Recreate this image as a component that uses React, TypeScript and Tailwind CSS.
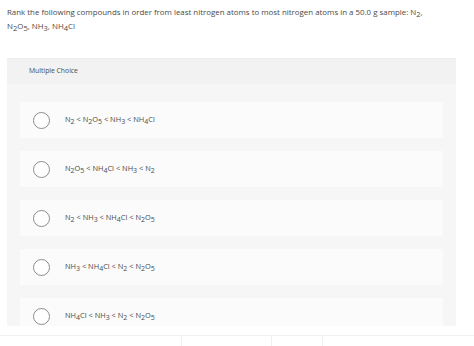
import React from "react";

const Sub = ({ children }: { children: React.ReactNode }) => (
  <span className="text-[0.95em] relative top-[0.2em]">{children}</span>
);

const N2 = () => (<>N<Sub>2</Sub></>);
const N2O5 = () => (<>N<Sub>2</Sub>O<Sub>5</Sub></>);
const NH3 = () => (<>NH<Sub>3</Sub></>);
const NH4Cl = () => (<>NH<Sub>4</Sub>Cl</>);

const options: React.ReactNode[] = [
  <><N2 /> &lt; <N2O5 /> &lt; <NH3 /> &lt; <NH4Cl /></>,
  <><N2O5 /> &lt; <NH4Cl /> &lt; <NH3 /> &lt; <N2 /></>,
  <><N2 /> &lt; <NH3 /> &lt; <NH4Cl /> &lt; <N2O5 /></>,
  <><NH3 /> &lt; <NH4Cl /> &lt; <N2 /> &lt; <N2O5 /></>,
  <><NH4Cl /> &lt; <NH3 /> &lt; <N2 /> &lt; <N2O5 /></>,
];

export default function App() {
  return (
    <div className="w-[474px] h-[346px] bg-white overflow-hidden text-[#4a4a4a]" style={{ fontFamily: "'Open Sans', sans-serif" }}>
      <div className="px-[7px] pt-[5px] text-[7.9px] leading-[14px] h-[58px] whitespace-nowrap">
        Rank the following compounds in order from least nitrogen atoms to most nitrogen atoms in a 50.0 g sample: <N2 />,
        <br />
        <N2O5 />, <NH3 />, <NH4Cl />
      </div>
      <div className="mx-[7px] w-[449px] border-t border-[#ececec]">
        <div className="bg-[#f2f2f2] h-[25px] flex items-center pl-[22px] text-[6.8px] text-[#4a4a4a]">Multiple Choice</div>
        <div className="bg-[#f6f6f6] h-[242px] overflow-hidden px-[13px] pt-[18px] flex flex-col gap-[13px]">
          {options.map((o, i) => (
            <div key={i} className="bg-[#fbfbfb] h-[36px] shrink-0 flex items-center">
              <div className="ml-[13px] w-[17px] h-[17px] rounded-full border-[1.5px] border-[#8c8c8c] bg-white shrink-0" />
              <div className="ml-[15px] text-[7.4px] text-[#4a4a4a] whitespace-nowrap">{o}</div>
            </div>
          ))}
        </div>
      </div>
      <div className="mt-[9px] border-t border-[#efefef] h-[12px] flex">
        <div className="w-[182px] border-r border-[#efefef]" />
        <div className="w-[90px] border-r border-[#efefef]" />
        <div className="w-[51px] border-r border-[#efefef]" />
      </div>
    </div>
  );
}
